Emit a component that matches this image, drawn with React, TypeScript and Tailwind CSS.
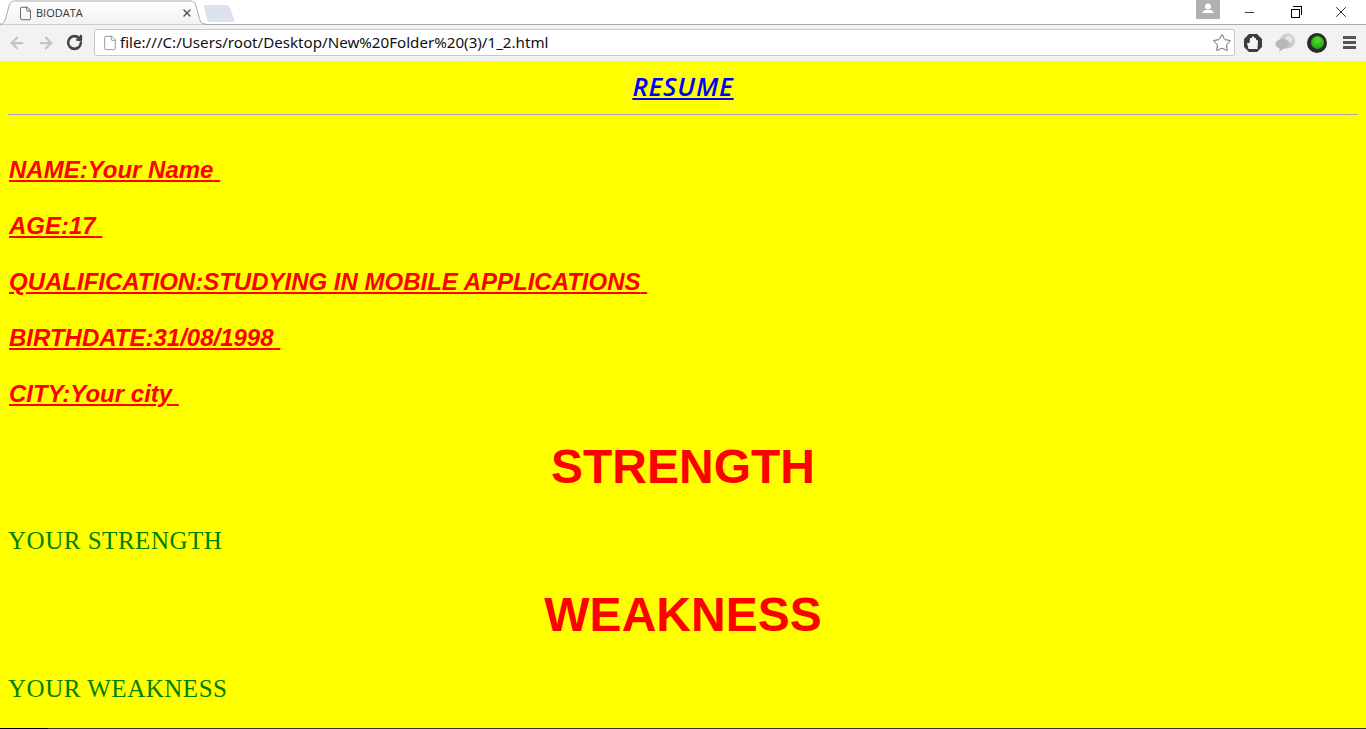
import { ArrowLeft, ArrowRight, File, Minus, RotateCw, Star, X } from "lucide-react";

const fields = [
  "NAME:Your Name",
  "AGE:17",
  "QUALIFICATION:STUDYING IN MOBILE APPLICATIONS",
  "BIRTHDATE:31/08/1998",
  "CITY:Your city",
];

function TitleBar() {
  return (
    <div className="relative z-10 flex h-[24px] items-start bg-white">
      <div className="relative h-[25px] w-[206px] shrink-0">
        <svg width="206" height="25" viewBox="0 0 206 25" className="absolute left-0 top-0">
          <defs>
            <linearGradient id="tabFill" x1="0" y1="0" x2="0" y2="1">
              <stop offset="0" stopColor="#ffffff" />
              <stop offset="1" stopColor="#f2f2f2" />
            </linearGradient>
          </defs>
          <path d="M0 24.5 C4 24 5 21 6 17 L9 6 C10 3 11 1 15 1 L190 1 C194 1 195 3 196 6 L199 17 C200 21 201 24 206 24.5 Z" fill="url(#tabFill)" />
          <path d="M0 24 C4 24 5 21 6 17 L9 6 C10 3 11 1 15 1 L190 1 C194 1 195 3 196 6 L199 17 C200 21 201 24 206 24" fill="none" stroke="#a8a8a8" />
        </svg>
        <div className="relative flex h-[25px] items-center pl-[18px] pr-[13px] pt-[1px]">
          <File size={15} strokeWidth={1.3} className="text-[#444]" />
          <span className="ml-[3px] flex-1 font-['Open_Sans',sans-serif] text-[11px] text-[#333]">BIODATA</span>
          <X size={12} strokeWidth={3} className="text-[#555]" />
        </div>
      </div>
      <svg width="32" height="18" viewBox="0 0 32 18" className="ml-[-3px] mt-[5px] shrink-0">
        <path d="M1 1.5 C1 0.5 2 0 3 0 L23 0 C25 0 26 1 27 3 L31 14 C32 16 31 17 29 17 L7 17 C5 17 4 16 4 14 Z" fill="#dce2eb" />
      </svg>
      <div className="flex-1" />
      <div className="mr-[6px] flex h-[19px] w-[24px] justify-center bg-[#b0b0b0]">
        <svg width="14" height="12" viewBox="0 0 14 12" className="mt-[3px]">
          <circle cx="7" cy="3.5" r="3" fill="white" />
          <path d="M1.5 10 C1.5 7.5 4 7 7 7 C10 7 12.5 7.5 12.5 10 Z" fill="white" />
        </svg>
      </div>
      <div className="flex h-[24px] items-center pr-[2px]">
        <div className="flex w-[46px] justify-center"><Minus size={15} strokeWidth={1.2} className="text-black" /></div>
        <div className="flex w-[46px] justify-center">
          <div className="relative mt-[2px] h-[9px] w-[9px] border border-black">
            <div className="absolute left-[1px] top-[-4px] h-[9px] w-[9px] border-r border-t border-black" />
          </div>
        </div>
        <div className="flex w-[46px] justify-center"><X size={18} strokeWidth={1.1} className="text-black" /></div>
      </div>
    </div>
  );
}

function ToolBar() {
  return (
    <div className="flex h-[37px] items-center border-t border-[#a8a8a8] bg-[#f2f2f2] pb-[1px]">
      <div className="flex w-[94px] items-center pl-[8px]">
        <ArrowLeft size={18} strokeWidth={3} className="text-[#c4c4c4]" />
        <ArrowRight size={18} strokeWidth={3} className="ml-[11px] text-[#c4c4c4]" />
        <RotateCw size={17} strokeWidth={3.6} className="ml-[11px] text-[#444]" />
      </div>
      <div className="flex h-[27px] w-[1141px] items-center rounded-[2px] border border-[#c8c8c8] bg-white pl-[7px] pr-[2px]">
        <File size={16} strokeWidth={1.1} className="text-[#777]" />
        <span className="ml-[2px] flex-1 font-['Noto_Sans',sans-serif] text-[15.15px] text-[#111]">file:///C:/Users/root/Desktop/New%20Folder%20(3)/1_2.html</span>
        <Star size={20} strokeWidth={1.2} className="text-[#666]" />
      </div>
      <svg width="20" height="20" viewBox="0 0 20 20" className="ml-[8px]">
        <path d="M6 1 L14 1 L19 6 L19 14 L14 19 L6 19 L1 14 L1 6 Z" fill="#3c3c3c" />
        <path d="M5.5 16 L4 10 L6.5 10 L7 5 L8.8 5 L9.2 3.5 L11 3.5 L11.4 5 L13 5.2 L13.2 7 L15 7.5 L14.5 16 Z" fill="#f4f4f4" />
      </svg>
      <svg width="22" height="20" viewBox="0 0 22 20" className="ml-[12px]">
        <circle cx="12.5" cy="8" r="7.5" fill="#cdcdcd" />
        <circle cx="14" cy="6" r="3.5" fill="#e6e6e6" />
        <ellipse cx="7.5" cy="11" rx="7" ry="5" fill="#b8b8b8" />
        <path d="M5 15 L4 19 L9 15.5 Z" fill="#b8b8b8" />
      </svg>
      <div className="ml-[10px] flex h-[20px] w-[20px] items-center justify-center rounded-full bg-[#2a2a2a]">
        <div className="h-[13px] w-[13px] rounded-full bg-[radial-gradient(circle_at_50%_35%,#4ee02e,#119a06)]" />
      </div>
      <div className="ml-[16px] flex w-[13px] flex-col gap-[2px]">
        <div className="h-[3px] bg-[#555]" />
        <div className="h-[3px] bg-[#555]" />
        <div className="h-[3px] bg-[#555]" />
      </div>
    </div>
  );
}

export default function App() {
  return (
    <div className="flex h-[729px] w-[1366px] flex-col overflow-hidden font-['Liberation_Sans',sans-serif]">
      <TitleBar />
      <ToolBar />
      <div className="flex-1 bg-[#ffff00] px-[8px]">
        <h2 className="mt-[11px] text-center font-['Open_Sans',sans-serif] text-[26px] font-semibold italic leading-[28px] tracking-[0.8px] text-[#0000ff] underline">RESUME</h2>
        <hr className="mt-[14px] border-t border-[#a8a8a8]" />
        <div className="mt-[41px]">
          {fields.map((f) => (
            <p key={f} className="mb-[28px] pl-[1px] text-[24px] font-bold italic leading-[28px] text-[#ff0000] underline">{f}&nbsp;</p>
          ))}
        </div>
        <h1 className="mt-[31px] text-center text-[48px] font-bold leading-[55px] text-[#ff0000]">STRENGTH</h1>
        <p className="mt-[33px] font-['Liberation_Serif',serif] text-[25px] leading-[28px] tracking-[0.52px] text-[#008000]">YOUR STRENGTH</p>
        <h1 className="mt-[32px] text-center text-[48px] font-bold leading-[55px] text-[#ff0000]">WEAKNESS</h1>
        <p className="mt-[33px] font-['Liberation_Serif',serif] text-[25px] leading-[28px] tracking-[0.52px] text-[#008000]">YOUR WEAKNESS</p>
      </div>
      <div className="flex h-[1px]">
        <div className="w-[48px] bg-black" />
        <div className="flex-1 bg-[#333]" />
      </div>
    </div>
  );
}
